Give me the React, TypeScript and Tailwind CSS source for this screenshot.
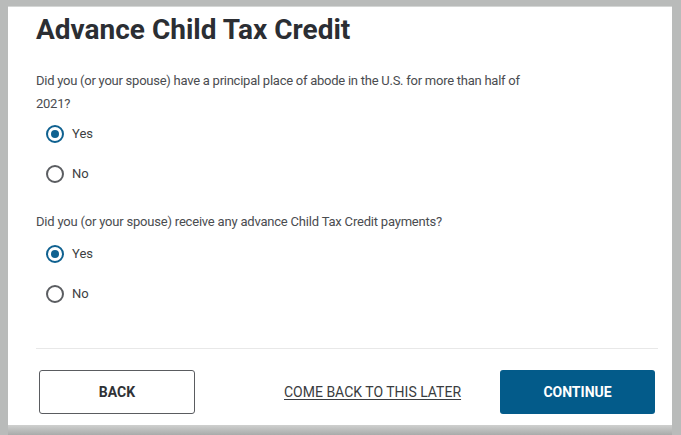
import { useState } from "react";

type Choice = "yes" | "no";

function Radio({ checked, label, onSelect }: { checked: boolean; label: string; onSelect: () => void }) {
  return (
    <button type="button" onClick={onSelect} className="flex items-center gap-[8px] h-[20px] ml-[10px]">
      <span
        className={`w-[18px] h-[18px] rounded-full border-2 flex items-center justify-center ${
          checked ? "border-[#0f6190]" : "border-[#5b5d61]"
        }`}
      >
        {checked && <span className="w-[8px] h-[8px] rounded-full bg-[#0f6190]" />}
      </span>
      <span className="text-[13px] text-[#3d3f43]">{label}</span>
    </button>
  );
}

export default function App() {
  const [abode, setAbode] = useState<Choice>("yes");
  const [payments, setPayments] = useState<Choice>("yes");

  return (
    <div className="h-[435px] w-[681px] bg-[#b9bbba] pt-[6px] pl-[8px] pr-[9px] font-['Roboto',sans-serif] flex flex-col">
      <div className="bg-white border-t border-[#d4d6d5] h-[419px] pl-[28px] pr-[14px] flex flex-col">
        <h1 className="text-[28px] font-bold text-[#2b2e33] leading-[34px] mt-[6px]">Advance Child Tax Credit</h1>

        <p className="text-[13px] text-[#4a4c50] leading-[23px] tracking-[-0.25px] mt-[22px] max-w-[490px]">
          Did you (or your spouse) have a principal place of abode in the U.S. for more than half of 2021?
        </p>
        <div className="flex flex-col gap-[20px] mt-[9px]">
          <Radio checked={abode === "yes"} label="Yes" onSelect={() => setAbode("yes")} />
          <Radio checked={abode === "no"} label="No" onSelect={() => setAbode("no")} />
        </div>

        <p className="text-[13px] text-[#4a4c50] leading-[23px] tracking-[-0.2px] mt-[26px]">
          Did you (or your spouse) receive any advance Child Tax Credit payments?
        </p>
        <div className="flex flex-col gap-[20px] mt-[11px]">
          <Radio checked={payments === "yes"} label="Yes" onSelect={() => setPayments("yes")} />
          <Radio checked={payments === "no"} label="No" onSelect={() => setPayments("no")} />
        </div>

        <div className="border-t border-[#e8e8e8] mt-[44px]" />

        <div className="flex items-center mt-[21px] pl-[3px] pr-[3px]">
          <button className="w-[156px] h-[44px] border border-[#5a5c60] rounded-[3px] text-[14px] font-bold text-[#303236]">
            BACK
          </button>
          <button className="ml-[89px] text-[14px] text-[#3a3c40] underline underline-offset-2">
            COME BACK TO THIS LATER
          </button>
          <button className="ml-auto w-[155px] h-[44px] bg-[#035b8a] rounded-[3px] text-[14px] font-bold text-white">
            CONTINUE
          </button>
        </div>
      </div>
      <div className="flex-1 bg-gradient-to-b from-[#cfd0cf] to-[#a9abaa]" />
    </div>
  );
}
